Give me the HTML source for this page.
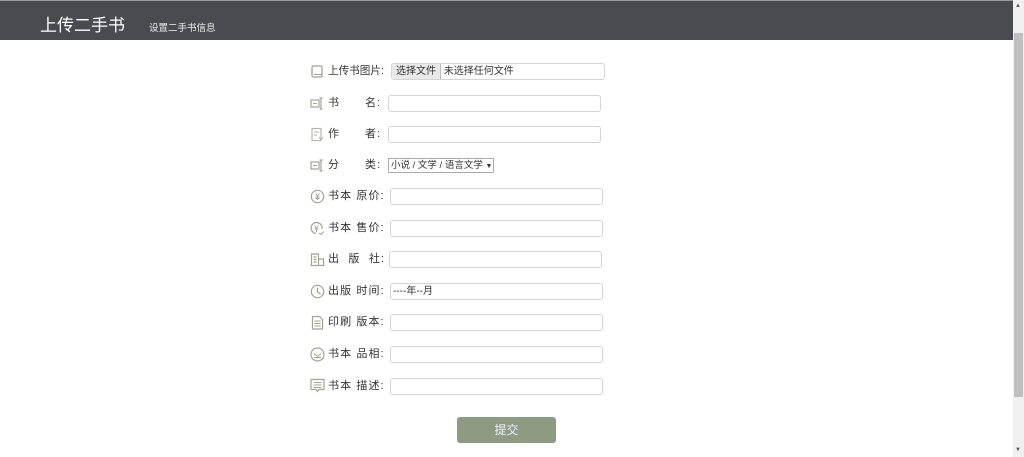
<!DOCTYPE html>
<html><head><meta charset="utf-8">
<style>
*{margin:0;padding:0;box-sizing:border-box}
html,body{width:1024px;height:457px;overflow:hidden;background:#fff;font-family:"Liberation Sans","Noto Sans CJK SC",sans-serif;color:#333}
.hd{position:absolute;left:0;top:0;width:1013px;height:40px;background:#4a4b50;border-top:1px solid #9a9a9a}
.hd .t{position:absolute;left:40px;top:10px;font-size:17px;color:#fff}
.hd .s{position:absolute;left:149px;top:19px;font-size:9.5px;color:#eee}
.sb{position:absolute;left:1013px;top:0;width:11px;height:457px;background:#f0f0f0}
.th{position:absolute;left:1014px;top:33px;width:9px;height:364px;background:#bfbfbf}
.ar{position:absolute;left:1015px;font-size:6px;color:#555}
.ic{position:absolute;left:310px;width:15px;height:15px}
.lb{position:absolute;left:328px;font-size:11px;line-height:17px;white-space:pre;letter-spacing:1.1px}
.in{position:absolute;height:17px;border:1px solid #d4d4d4;border-radius:3px;background:#fff}
.btn{position:absolute;left:457px;top:417px;width:99px;height:26px;background:#8e9a82;border-radius:3px;color:#eef;font-size:12px;text-align:center;line-height:26px}
</style></head><body>
<div class="hd"><div class="t">上传二手书</div><div class="s">设置二手书信息</div></div>
<div class="sb"></div><div class="th"></div>
<div class="ar" style="top:3px">▲</div><div class="ar" style="top:447px">▼</div>

<svg class="ic" style="top:64px" viewBox="0 0 15 15"><rect x="2" y="2" width="10" height="11" rx="1.5" fill="none" stroke="#a0a595" stroke-width="1.3"/><line x1="4" y1="10.5" x2="12" y2="10.5" stroke="#a0a595"/></svg>
<div class="lb" style="top:63px;letter-spacing:0;font-size:10.6px">上传书图片:</div>
<div class="in" style="left:391px;top:63px;width:214px;font-size:10px;line-height:15px"><span style="display:inline-block;height:15px;padding:0 4px;background:#e9e9e9;border-right:1px solid #bbb;border-radius:3px 0 0 3px">选择文件</span> 未选择任何文件</div>

<svg class="ic" style="top:96px" viewBox="0 0 15 15"><rect x="1" y="4" width="8" height="7" fill="none" stroke="#a0a595" stroke-width="1.2"/><line x1="3" y1="7.5" x2="7" y2="7.5" stroke="#a0a595"/><path d="M11 2v11M9.5 2h3M9.5 13h3" stroke="#a0a595" fill="none" stroke-width="1.2"/></svg>
<div class="lb" style="top:95px">书      名:</div>
<div class="in" style="left:388px;top:95px;width:213px"></div>

<svg class="ic" style="top:127px" viewBox="0 0 15 15"><rect x="2" y="1.5" width="9" height="12" fill="none" stroke="#b5b8ad" stroke-width="1.2"/><path d="M4 5h5M4 8h3M9 10l2 3 2-3" stroke="#b5b8ad" fill="none"/></svg>
<div class="lb" style="top:126px">作      者:</div>
<div class="in" style="left:388px;top:126px;width:213px"></div>

<svg class="ic" style="top:158px" viewBox="0 0 15 15"><rect x="1" y="4" width="8" height="7" fill="none" stroke="#a0a595" stroke-width="1.2"/><line x1="3" y1="7.5" x2="7" y2="7.5" stroke="#a0a595"/><path d="M11 2v11M9.5 2h3M9.5 13h3" stroke="#a0a595" fill="none" stroke-width="1.2"/></svg>
<div class="lb" style="top:157px">分      类:</div>
<div class="in" style="left:388px;top:158px;width:106px;height:15px;border-radius:1px;border-color:#aaa;font-size:9.5px;line-height:13px;padding-left:2px">小说 / 文学 / 语言文学 <span style="font-size:7px">▼</span></div>

<svg class="ic" style="top:189px" viewBox="0 0 15 15"><circle cx="7.5" cy="7.5" r="6.2" fill="none" stroke="#a0a595" stroke-width="1.2"/><path d="M5.5 4.5l2 2.5 2-2.5M7.5 7v4M5.5 8h4M5.5 9.5h4" stroke="#a0a595" fill="none" stroke-width=".9"/></svg>
<div class="lb" style="top:188px">书本 原价:</div>
<div class="in" style="left:390px;top:188px;width:213px"></div>

<svg class="ic" style="top:221px" viewBox="0 0 15 15"><path d="M12 8A5.5 5.5 0 1 0 6 12.5" fill="none" stroke="#a0a595" stroke-width="1.2"/><path d="M4.5 4.5l2 2.5 2-2.5M6.5 7v4M4.5 8h4" stroke="#a0a595" fill="none" stroke-width=".9"/><path d="M9 12l2 1.5 3-3" stroke="#a0a595" fill="none"/></svg>
<div class="lb" style="top:220px">书本 售价:</div>
<div class="in" style="left:390px;top:220px;width:213px"></div>

<svg class="ic" style="top:252px" viewBox="0 0 15 15"><path d="M1.5 13.5V2h7v11.5M8.5 7h5v6.5M0.5 13.5h14M3.5 5h3M3.5 7.5h3M3.5 10h3" stroke="#a0a595" fill="none" stroke-width="1.2"/></svg>
<div class="lb" style="top:251px">出  版  社:</div>
<div class="in" style="left:389px;top:251px;width:213px"></div>

<svg class="ic" style="top:284px" viewBox="0 0 15 15"><circle cx="7.5" cy="7.5" r="6.2" fill="none" stroke="#a0a595" stroke-width="1.2"/><path d="M7.5 3.5v4.5l3 2" stroke="#a0a595" fill="none" stroke-width="1.2"/></svg>
<div class="lb" style="top:283px">出版 时间:</div>
<div class="in" style="left:390px;top:283px;width:213px;font-size:10px;line-height:15px;padding-left:2px;letter-spacing:0">----年--月</div>

<svg class="ic" style="top:315px" viewBox="0 0 15 15"><path d="M2.5 1.5h7l3 3v9.5h-10z" stroke="#a0a595" fill="none" stroke-width="1.2"/><path d="M4.5 6h6M4.5 8.5h6M4.5 11h6" stroke="#a0a595"/></svg>
<div class="lb" style="top:314px">印刷 版本:</div>
<div class="in" style="left:390px;top:314px;width:213px"></div>

<svg class="ic" style="top:347px" viewBox="0 0 15 15"><circle cx="7.5" cy="7.5" r="6.5" fill="none" stroke="#a0a595" stroke-width="1.2"/><path d="M4 6.5l3.5 3 3.5-3M4 10.5h7" stroke="#a0a595" fill="none"/></svg>
<div class="lb" style="top:346px">书本 品相:</div>
<div class="in" style="left:390px;top:346px;width:213px"></div>

<svg class="ic" style="top:378px" viewBox="0 0 15 15"><path d="M1 1.5h13v10H9l-1.5 2-1.5-2H1z" stroke="#a0a595" fill="none" stroke-width="1.2"/><path d="M3.5 4.5h8M3.5 7h8M3.5 9.5h8" stroke="#a0a595"/></svg>
<div class="lb" style="top:378px">书本 描述:</div>
<div class="in" style="left:390px;top:378px;width:213px"></div>

<div class="btn">提交</div>
</body></html>
